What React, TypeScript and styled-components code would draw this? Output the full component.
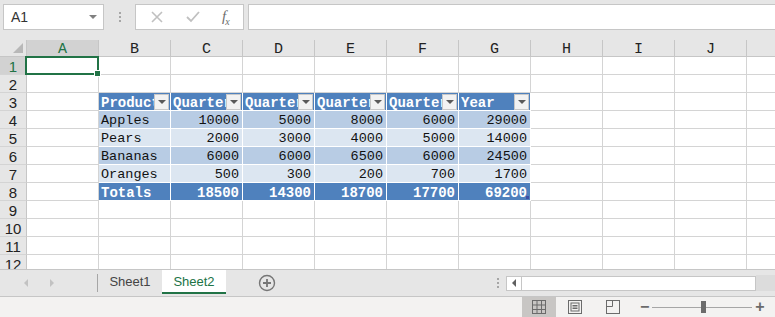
import styled, { createGlobalStyle } from "styled-components";

const GlobalStyle = createGlobalStyle`
  html, body {
    margin: 0;
    padding: 0;
    overflow: hidden;
    background: #ffffff;
  }
`;

const COLS = ["A", "B", "C", "D", "E", "F", "G", "H", "I", "J", "K"];
const ROW_COUNT = 12;

const HEADERS = ["Product", "Quarter 1", "Quarter 2", "Quarter 3", "Quarter 4", "Year"];
const DATA: (string | number)[][] = [
  ["Apples", 10000, 5000, 8000, 6000, 29000],
  ["Pears", 2000, 3000, 4000, 5000, 14000],
  ["Bananas", 6000, 6000, 6500, 6000, 24500],
  ["Oranges", 500, 300, 200, 700, 1700],
];
const TOTALS: (string | number)[] = ["Totals", 18500, 14300, 18700, 17700, 69200];

const Window = styled.div`
  width: 775px;
  height: 317px;
  display: flex;
  flex-direction: column;
  overflow: hidden;
  font-family: "Liberation Sans", Arial, sans-serif;
`;

/* ---------- formula bar ---------- */

const Toolbar = styled.div`
  height: 40px;
  flex: none;
  background: #e6e6e6;
  display: flex;
  align-items: flex-start;
  padding: 4px 0 0 3px;
  box-sizing: border-box;
`;

const NameBox = styled.div`
  width: 101px;
  height: 26px;
  box-sizing: border-box;
  background: #fff;
  border: 1px solid #c6c6c6;
  display: flex;
  align-items: center;
  justify-content: space-between;
  padding: 0 6px 0 7px;
  font-size: 14px;
  color: #333;
`;

const Caret = styled.span`
  width: 0;
  height: 0;
  border-left: 4px solid transparent;
  border-right: 4px solid transparent;
  border-top: 4px solid #808080;
`;

const Grip = styled.div`
  width: 31px;
  height: 26px;
  display: flex;
  flex-direction: column;
  align-items: center;
  justify-content: center;
  gap: 2px;
  span {
    width: 2px;
    height: 2px;
    background: #a6a6a6;
  }
`;

const FxBox = styled.div`
  width: 109px;
  height: 26px;
  box-sizing: border-box;
  background: #fff;
  border: 1px solid #c6c6c6;
  display: flex;
  align-items: center;
  justify-content: space-around;
  padding: 0 4px;
`;

const FxLabel = styled.span`
  font-family: "Liberation Serif", serif;
  font-style: italic;
  font-size: 15px;
  color: #6e6e6e;
  letter-spacing: -1px;
  sub {
    font-size: 10px;
  }
`;

const FormulaInput = styled.div`
  flex: 1;
  height: 26px;
  margin-left: 4px;
  box-sizing: border-box;
  background: #fff;
  border: 1px solid #c6c6c6;
  border-right: none;
`;

/* ---------- grid ---------- */

const Sheet = styled.div`
  height: 229px;
  flex: none;
  overflow: hidden;
  display: grid;
  grid-template-columns: 27px repeat(11, 72px);
  grid-template-rows: 17px;
  grid-auto-rows: 18px;
  background: #fff;
`;

const Corner = styled.div`
  background: #e6e6e6;
  border-right: 1px solid #c6c6c6;
  border-bottom: 1px solid #c6c6c6;
  position: relative;
  &::after {
    content: "";
    position: absolute;
    right: 3px;
    bottom: 3px;
    width: 0;
    height: 0;
    border-left: 10px solid transparent;
    border-bottom: 10px solid #b8b8b8;
  }
`;

const ColHead = styled.div<{ $active?: boolean }>`
  background: ${(p) => (p.$active ? "#d2d2d2" : "#e6e6e6")};
  color: ${(p) => (p.$active ? "#217346" : "#222")};
  border-right: 1px solid #c6c6c6;
  border-bottom: 1px solid #c6c6c6;
  box-sizing: border-box;
  display: flex;
  align-items: center;
  justify-content: center;
  padding-top: 2px;
  font-family: "Liberation Mono", monospace;
  font-size: 15px;
  line-height: 1;
`;

const RowHead = styled.div<{ $active?: boolean }>`
  background: ${(p) => (p.$active ? "#d2d2d2" : "#e6e6e6")};
  color: ${(p) => (p.$active ? "#217346" : "#222")};
  border-right: 1px solid #c6c6c6;
  border-bottom: 1px solid #d4d4d4;
  box-sizing: border-box;
  display: flex;
  align-items: center;
  justify-content: center;
  padding-top: 2px;
  font-size: 15px;
`;

type Tone = "plain" | "head" | "dark" | "light" | "total";

const toneBg: Record<Tone, string> = {
  plain: "#ffffff",
  head: "#4f81bd",
  dark: "#b8cce4",
  light: "#dce6f1",
  total: "#4f81bd",
};

const Cell = styled.div<{ $tone: Tone; $num?: boolean }>`
  position: relative;
  box-sizing: border-box;
  background: ${(p) => toneBg[p.$tone]};
  border-right: 1px solid ${(p) => (p.$tone === "plain" ? "#d4d4d4" : "#ffffff")};
  border-bottom: 1px solid ${(p) => (p.$tone === "plain" ? "#d4d4d4" : "#ffffff")};
  display: flex;
  align-items: center;
  justify-content: ${(p) => (p.$num ? "flex-end" : "flex-start")};
  padding: 2px 3px 0 2px;
  white-space: nowrap;
  font-family: "Liberation Mono", monospace;
  font-size: ${(p) => (p.$tone === "head" || p.$tone === "total" ? "14px" : "13.5px")};
  font-weight: ${(p) => (p.$tone === "head" || p.$tone === "total" ? "bold" : "normal")};
  color: ${(p) => (p.$tone === "head" || p.$tone === "total" ? "#ffffff" : "#111")};
`;

const HeadText = styled.span`
  flex: 1;
  min-width: 0;
  overflow: hidden;
`;

const FilterButton = styled.span`
  flex: none;
  align-self: center;
  width: 15px;
  height: 16px;
  margin: -2px -2px 0 0;
  box-sizing: border-box;
  background: #f2f2f2;
  border: 1px solid #c8c8c8;
  display: flex;
  align-items: center;
  justify-content: center;
  &::after {
    content: "";
    border-left: 4px solid transparent;
    border-right: 4px solid transparent;
    border-top: 4px solid #5a5a5a;
  }
`;

const Selection = styled.div`
  position: absolute;
  z-index: 2;
  left: -2px;
  top: -1px;
  right: -1px;
  bottom: -1px;
  border: 2px solid #217346;
  pointer-events: none;
  &::after {
    content: "";
    position: absolute;
    right: -4px;
    bottom: -4px;
    width: 5px;
    height: 5px;
    background: #217346;
    border: 1px solid #fff;
  }
`;

const ResizeMark = styled.span`
  position: absolute;
  right: 1px;
  bottom: 1px;
  width: 3px;
  height: 3px;
  background: #3f4fa6;
`;

/* ---------- tabs ---------- */

const TabBar = styled.div`
  height: 28px;
  flex: none;
  background: #e6e6e6;
  border-top: 1px solid #c6c6c6;
  border-bottom: 1px solid #c6c6c6;
  box-sizing: border-box;
  display: flex;
  align-items: stretch;
`;

const NavArea = styled.div`
  width: 98px;
  display: flex;
  align-items: center;
  padding-left: 24px;
  gap: 22px;
  box-sizing: border-box;
  border-right: 1px solid #a6a6a6;
  margin: 4px 0 4px 0;
`;

const NavArrow = styled.span<{ $dir: "left" | "right" }>`
  width: 0;
  height: 0;
  border-top: 4px solid transparent;
  border-bottom: 4px solid transparent;
  ${(p) =>
    p.$dir === "left"
      ? "border-right: 4px solid #c2c2c2;"
      : "border-left: 4px solid #c2c2c2;"}
`;

const Tab = styled.div<{ $active?: boolean }>`
  width: 64px;
  box-sizing: border-box;
  display: flex;
  align-items: center;
  justify-content: center;
  font-size: 13px;
  background: ${(p) => (p.$active ? "#ffffff" : "transparent")};
  color: ${(p) => (p.$active ? "#217346" : "#444")};
  border-bottom: ${(p) => (p.$active ? "2px solid #217346" : "2px solid transparent")};
  margin-bottom: 2px;
`;

const AddSheet = styled.div`
  width: 82px;
  display: flex;
  align-items: center;
  justify-content: center;
`;

const ScrollGroup = styled.div`
  flex: 1;
  display: flex;
  align-items: center;
  justify-content: flex-end;
`;

const ScrollGrip = styled(Grip)`
  width: 16px;
  height: 14px;
`;

const ScrollTrack = styled.div`
  width: 250px;
  height: 15px;
  box-sizing: border-box;
  border: 1px solid #c6c6c6;
  background: #fff;
  display: flex;
`;

const ScrollButton = styled.div`
  width: 14px;
  border-right: 1px solid #c6c6c6;
  display: flex;
  align-items: center;
  justify-content: center;
  &::after {
    content: "";
    border-top: 4px solid transparent;
    border-bottom: 4px solid transparent;
    border-right: 4px solid #606060;
  }
`;

const ScrollRest = styled.div`
  width: 19px;
  align-self: stretch;
  background: #dcdcdc;
  margin: 5px 0;
`;

/* ---------- status bar ---------- */

const StatusBar = styled.div`
  height: 20px;
  flex: none;
  background: #f3f2f1;
  display: flex;
  align-items: stretch;
  padding-left: 522px;
  box-sizing: border-box;
`;

const ViewButton = styled.div<{ $active?: boolean }>`
  width: ${(p) => (p.$active ? "34px" : "38px")};
  background: ${(p) => (p.$active ? "#c8c6c4" : "transparent")};
  display: flex;
  align-items: center;
  justify-content: center;
`;

const Zoom = styled.div`
  display: flex;
  align-items: center;
  margin-left: 8px;
  gap: 3px;
`;

const SliderLine = styled.div`
  width: 100px;
  height: 1px;
  background: #a6a6a6;
  position: relative;
`;

const SliderThumb = styled.span`
  position: absolute;
  left: 49px;
  top: -6px;
  width: 5px;
  height: 12px;
  background: #6b6b6b;
`;

const Glyph = styled.span`
  font-size: 16px;
  font-weight: bold;
  color: #6b6b6b;
  line-height: 1;
`;

const GRID_STROKE = "#6b6b6b";

function cellTone(r: number, c: number): Tone {
  if (c < 1 || c > 6) return "plain";
  if (r === 2) return "head";
  if (r >= 3 && r <= 6) return r % 2 === 1 ? "dark" : "light";
  if (r === 7) return "total";
  return "plain";
}

function cellValue(r: number, c: number): string | number | null {
  if (c < 1 || c > 6) return null;
  if (r >= 3 && r <= 6) return DATA[r - 3][c - 1];
  if (r === 7) return TOTALS[c - 1];
  return null;
}

export default function App() {
  const rows = Array.from({ length: ROW_COUNT }, (_, i) => i);

  return (
    <Window>
      <GlobalStyle />
      <Toolbar>
        <NameBox>
          A1
          <Caret />
        </NameBox>
        <Grip>
          <span />
          <span />
          <span />
        </Grip>
        <FxBox>
          <svg width="14" height="14" viewBox="0 0 14 14">
            <path d="M2 2 L12 12 M12 2 L2 12" stroke="#c0c0c0" strokeWidth="1.6" />
          </svg>
          <svg width="16" height="14" viewBox="0 0 16 14">
            <path d="M2 7 L6 11 L14 2" stroke="#c0c0c0" strokeWidth="1.8" fill="none" />
          </svg>
          <FxLabel>
            f<sub>x</sub>
          </FxLabel>
        </FxBox>
        <FormulaInput />
      </Toolbar>

      <Sheet>
        <Corner />
        {COLS.map((c) => (
          <ColHead key={c} $active={c === "A"}>
            {c}
          </ColHead>
        ))}
        {rows.map((r) => (
          <Row key={r} r={r} />
        ))}
      </Sheet>

      <TabBar>
        <NavArea>
          <NavArrow $dir="left" />
          <NavArrow $dir="right" />
        </NavArea>
        <Tab>Sheet1</Tab>
        <Tab $active>Sheet2</Tab>
        <AddSheet>
          <svg width="18" height="18" viewBox="0 0 18 18">
            <circle cx="9" cy="9" r="7.5" fill="none" stroke="#767676" strokeWidth="1.4" />
            <path d="M9 5 V13 M5 9 H13" stroke="#767676" strokeWidth="1.8" />
          </svg>
        </AddSheet>
        <ScrollGroup>
          <ScrollGrip>
            <span />
            <span />
            <span />
          </ScrollGrip>
          <ScrollTrack>
            <ScrollButton />
          </ScrollTrack>
          <ScrollRest />
        </ScrollGroup>
      </TabBar>

      <StatusBar>
        <ViewButton $active>
          <svg width="14" height="14" viewBox="0 0 14 14">
            <rect x="0.5" y="0.5" width="13" height="13" fill="none" stroke={GRID_STROKE} />
            <path d="M5 0.5 V13.5 M9.5 0.5 V13.5 M0.5 5 H13.5 M0.5 9.5 H13.5" stroke={GRID_STROKE} />
          </svg>
        </ViewButton>
        <ViewButton>
          <svg width="14" height="14" viewBox="0 0 14 14">
            <rect x="0.5" y="0.5" width="13" height="13" fill="none" stroke={GRID_STROKE} />
            <rect x="3" y="3" width="8" height="8" fill="none" stroke={GRID_STROKE} />
            <path d="M4.5 5.5 H9.5 M4.5 7 H9.5 M4.5 8.5 H9.5" stroke={GRID_STROKE} />
          </svg>
        </ViewButton>
        <ViewButton>
          <svg width="14" height="14" viewBox="0 0 14 14">
            <rect x="0.5" y="0.5" width="13" height="13" fill="none" stroke={GRID_STROKE} />
            <path d="M0.5 6.5 H6.5 V0.5" stroke={GRID_STROKE} fill="none" />
          </svg>
        </ViewButton>
        <Zoom>
          <Glyph>−</Glyph>
          <SliderLine>
            <SliderThumb />
          </SliderLine>
          <Glyph>+</Glyph>
        </Zoom>
      </StatusBar>
    </Window>
  );
}

function Row({ r }: { r: number }) {
  return (
    <>
      <RowHead $active={r === 0}>{r + 1}</RowHead>
      {COLS.map((_, c) => {
        const tone = cellTone(r, c);
        const key = `${r}-${c}`;
        if (tone === "head") {
          return (
            <Cell key={key} $tone={tone}>
              <HeadText>{HEADERS[c - 1]}</HeadText>
              <FilterButton />
            </Cell>
          );
        }
        const value = cellValue(r, c);
        return (
          <Cell key={key} $tone={tone} $num={typeof value === "number"}>
            {value}
            {r === 0 && c === 0 && <Selection />}
            {r === 7 && c === 6 && <ResizeMark />}
          </Cell>
        );
      })}
    </>
  );
}
